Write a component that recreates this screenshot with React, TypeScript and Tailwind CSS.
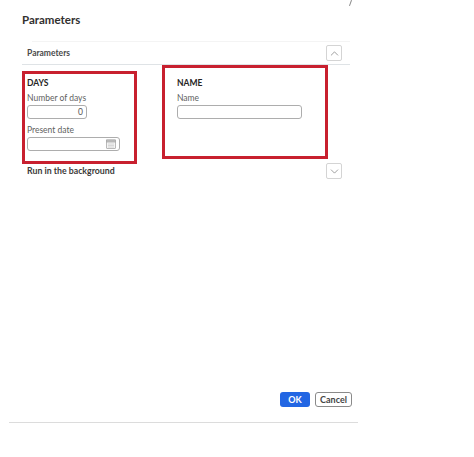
import { ChevronDown, ChevronUp } from "lucide-react";

const font = { fontFamily: 'Lato, "Open Sans", sans-serif' };

function CollapseButton({ open }: { open: boolean }) {
  return (
    <button className="w-[16px] h-[16px] flex items-center justify-center rounded-[2px] border border-[#d4d4d4] bg-white text-[#4f4f4f]">
      {open ? <ChevronUp size={13} strokeWidth={1} /> : <ChevronDown size={13} strokeWidth={1} />}
    </button>
  );
}

function Field({ label, width, children }: { label: string; width: string; children?: React.ReactNode }) {
  return (
    <div>
      <div className="text-[8.5px] leading-[12px] text-[#5f5f5f]">{label}</div>
      <div className={`${width} h-[14px] mt-[1px] flex items-center justify-end px-[3px] rounded-[3px] border border-[#adadad] bg-white`}>
        {children}
      </div>
    </div>
  );
}

function CalendarIcon() {
  return (
    <svg width="10" height="10" viewBox="0 0 10 10" fill="none" stroke="#a8a8a8" strokeWidth="0.8">
      <rect x="0.5" y="1" width="9" height="8.5" rx="0.5" fill="#f4f4f4" />
      <rect x="0.5" y="1" width="9" height="2" fill="#c4c4c4" />
      <path d="M2 5h6M2 6.5h6M2 8h6" stroke="#d0d0d0" />
    </svg>
  );
}

export default function App() {
  return (
    <div className="w-[474px] h-[457px] bg-white overflow-hidden relative" style={font}>
      {/* stray mark at the top edge */}
      <div className="absolute left-[350px] top-[0px] w-[1px] h-[6px] bg-[#8a8a8a] rotate-[20deg]" />

      <div className="w-[349px] ml-[9px] h-[423px] flex flex-col border-b border-[#dcdcdc]">
        <h1 className="ml-[13px] mt-[11px] text-[11.5px] leading-[18px] font-bold text-[#323130]">Parameters</h1>

        <div className="ml-[13px] mr-[8px] mt-[12px]">
          <div className="h-[23px] ml-[10px] border-t border-[#f4f4f4] flex items-center justify-between pr-[8px]">
            <span className="-ml-[5px] text-[8.5px] font-bold text-[#4a4a4a]">Parameters</span>
            <CollapseButton open />
          </div>
          <div className="h-[1px] bg-[#dfe3e6]" />

          <div className="flex items-start">
            <div className="w-[115px] h-[93px] mt-[6px] border-[3px] border-[#c8202f] pl-[2px] pt-[3px]">
              <div className="text-[8.5px] leading-[13px] font-bold text-[#252423]">DAYS</div>
              <div className="mt-[2px]">
                <Field label="Number of days" width="w-[60px]">
                  <span className="text-[8.5px] text-[#555]">0</span>
                </Field>
              </div>
              <div className="mt-[5px]">
                <Field label="Present date" width="w-[93px]">
                  <CalendarIcon />
                </Field>
              </div>
            </div>
            <div className="w-[166px] h-[94px] ml-[25px] border-[3px] border-[#c8202f] pl-[12px] pt-[9px]">
              <div className="text-[8.5px] leading-[13px] font-bold text-[#252423]">NAME</div>
              <div className="mt-[2px]">
                <Field label="Name" width="w-[125px]" />
              </div>
            </div>
          </div>

          <div className="h-[16px] -mt-[1px] flex items-center justify-between pl-[5px] pr-[8px]">
            <span className="text-[8.75px] font-bold text-[#3b3a39]">Run in the background</span>
            <CollapseButton open={false} />
          </div>
        </div>

        <div className="mt-auto mb-[15px] flex justify-end gap-[5px] pr-[6px]">
          <button className="w-[30px] h-[15px] rounded-[3px] bg-[#2266e3] text-white text-[9px] font-bold">OK</button>
          <button className="w-[37px] h-[15px] rounded-[3px] border border-[#8a8a8a] bg-white text-[9px] font-bold text-[#444]">Cancel</button>
        </div>
      </div>
    </div>
  );
}
